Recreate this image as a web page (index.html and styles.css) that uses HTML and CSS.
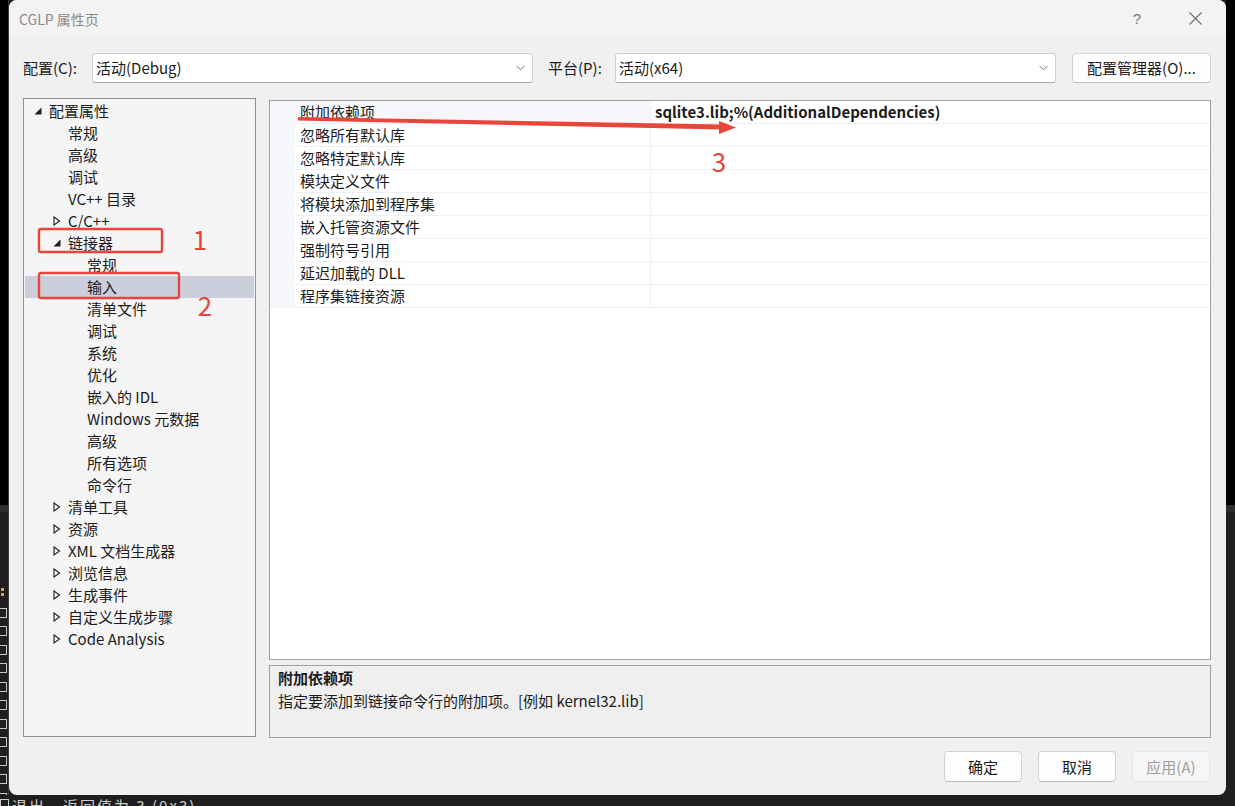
FILE: index.html
```html
<!DOCTYPE html>
<html lang="zh-CN">
<head>
<meta charset="utf-8">
<title>CGLP 属性页</title>
<link rel="stylesheet" href="styles.css">
</head>
<body>
<div class="desk">
  <div class="side side-left">
    <div class="term">
      <i class="dot"></i>
      <i class="box"></i><i class="box"></i><i class="box"></i><i class="box"></i><i class="box"></i><i class="box"></i><i class="box"></i><i class="box"></i><i class="box"></i><i class="box"></i><i class="box"></i>
    </div>
  </div>
  <div class="dialog">
    <div class="titlebar">
      <span class="title">CGLP 属性页</span>
      <div class="title-ctrls">
        <span class="help">?</span>
        <svg class="close" width="13" height="13" viewBox="0 0 13 13"><path d="M0.5 0.5 L12.5 12.5 M12.5 0.5 L0.5 12.5" stroke="#6f6f6f" stroke-width="1.1" fill="none"/></svg>
      </div>
    </div>

    <div class="config-row">
      <span class="lbl lbl-cfg">配置(C):</span>
      <div class="select"><span>活动(Debug)</span><svg class="chev" width="9" height="6" viewBox="0 0 9 6"><path d="M0.5 0.8 L4.5 4.8 L8.5 0.8" stroke="#707070" stroke-width="1" fill="none"/></svg></div>
      <span class="lbl lbl-plat">平台(P):</span>
      <div class="select"><span>活动(x64)</span><svg class="chev" width="9" height="6" viewBox="0 0 9 6"><path d="M0.5 0.8 L4.5 4.8 L8.5 0.8" stroke="#707070" stroke-width="1" fill="none"/></svg></div>
      <button class="btn btn-mgr">配置管理器(O)...</button>
    </div>

    <div class="main">
      <div class="tree">
        <div class="node l0"><span class="ico"><svg width="8" height="8" viewBox="0 0 8 8"><path d="M7.5 0.5 L7.5 7.5 L0.5 7.5 Z" fill="#1e1e1e"/></svg></span>配置属性</div>
        <div class="node l1"><span class="ico"></span>常规</div>
        <div class="node l1"><span class="ico"></span>高级</div>
        <div class="node l1"><span class="ico"></span>调试</div>
        <div class="node l1"><span class="ico"></span>VC++ 目录</div>
        <div class="node l1"><span class="ico"><svg width="8" height="10" viewBox="0 0 8 10"><path d="M1 1 L6.5 5 L1 9 Z" fill="none" stroke="#1e1e1e" stroke-width="1.1"/></svg></span>C/C++</div>
        <div class="node l1"><span class="ico"><svg width="8" height="8" viewBox="0 0 8 8"><path d="M7.5 0.5 L7.5 7.5 L0.5 7.5 Z" fill="#1e1e1e"/></svg></span>链接器</div>
        <div class="node l2"><span class="ico"></span>常规</div>
        <div class="node l2 selected"><span class="ico"></span>输入</div>
        <div class="node l2"><span class="ico"></span>清单文件</div>
        <div class="node l2"><span class="ico"></span>调试</div>
        <div class="node l2"><span class="ico"></span>系统</div>
        <div class="node l2"><span class="ico"></span>优化</div>
        <div class="node l2"><span class="ico"></span>嵌入的 IDL</div>
        <div class="node l2"><span class="ico"></span>Windows 元数据</div>
        <div class="node l2"><span class="ico"></span>高级</div>
        <div class="node l2"><span class="ico"></span>所有选项</div>
        <div class="node l2"><span class="ico"></span>命令行</div>
        <div class="node l1"><span class="ico"><svg width="8" height="10" viewBox="0 0 8 10"><path d="M1 1 L6.5 5 L1 9 Z" fill="none" stroke="#1e1e1e" stroke-width="1.1"/></svg></span>清单工具</div>
        <div class="node l1"><span class="ico"><svg width="8" height="10" viewBox="0 0 8 10"><path d="M1 1 L6.5 5 L1 9 Z" fill="none" stroke="#1e1e1e" stroke-width="1.1"/></svg></span>资源</div>
        <div class="node l1"><span class="ico"><svg width="8" height="10" viewBox="0 0 8 10"><path d="M1 1 L6.5 5 L1 9 Z" fill="none" stroke="#1e1e1e" stroke-width="1.1"/></svg></span>XML 文档生成器</div>
        <div class="node l1"><span class="ico"><svg width="8" height="10" viewBox="0 0 8 10"><path d="M1 1 L6.5 5 L1 9 Z" fill="none" stroke="#1e1e1e" stroke-width="1.1"/></svg></span>浏览信息</div>
        <div class="node l1"><span class="ico"><svg width="8" height="10" viewBox="0 0 8 10"><path d="M1 1 L6.5 5 L1 9 Z" fill="none" stroke="#1e1e1e" stroke-width="1.1"/></svg></span>生成事件</div>
        <div class="node l1"><span class="ico"><svg width="8" height="10" viewBox="0 0 8 10"><path d="M1 1 L6.5 5 L1 9 Z" fill="none" stroke="#1e1e1e" stroke-width="1.1"/></svg></span>自定义生成步骤</div>
        <div class="node l1"><span class="ico"><svg width="8" height="10" viewBox="0 0 8 10"><path d="M1 1 L6.5 5 L1 9 Z" fill="none" stroke="#1e1e1e" stroke-width="1.1"/></svg></span>Code Analysis</div>
      </div>

      <div class="right">
        <div class="grid">
          <div class="prow first"><span class="gut"></span><span class="pname">附加依赖项</span><span class="pval">sqlite3.lib;%(AdditionalDependencies)</span></div>
          <div class="prow"><span class="gut"></span><span class="pname">忽略所有默认库</span><span class="pval"></span></div>
          <div class="prow"><span class="gut"></span><span class="pname">忽略特定默认库</span><span class="pval"></span></div>
          <div class="prow"><span class="gut"></span><span class="pname">模块定义文件</span><span class="pval"></span></div>
          <div class="prow"><span class="gut"></span><span class="pname">将模块添加到程序集</span><span class="pval"></span></div>
          <div class="prow"><span class="gut"></span><span class="pname">嵌入托管资源文件</span><span class="pval"></span></div>
          <div class="prow"><span class="gut"></span><span class="pname">强制符号引用</span><span class="pval"></span></div>
          <div class="prow"><span class="gut"></span><span class="pname">延迟加载的 DLL</span><span class="pval"></span></div>
          <div class="prow"><span class="gut"></span><span class="pname">程序集链接资源</span><span class="pval"></span></div>
        </div>
        <div class="desc">
          <div class="desc-title">附加依赖项</div>
          <div class="desc-text">指定要添加到链接命令行的附加项。[例如 kernel32.lib]</div>
        </div>
      </div>
    </div>

    <div class="footer">
      <button class="btn btn-ok">确定</button>
      <button class="btn btn-ok">取消</button>
      <button class="btn btn-ok disabled">应用(A)</button>
    </div>
  </div>
  <div class="side side-right"></div>
</div>
<div class="console-line"><i class="cbox"></i><span>退出，返回值为 3 (0x3)。</span></div>

<svg class="annot" width="1235" height="806" viewBox="0 0 1235 806">
  <rect x="39" y="229" width="123" height="23" rx="2" fill="none" stroke="#e8453b" stroke-width="2.4"/>
  <rect x="39" y="273" width="140" height="25" rx="2" fill="none" stroke="#e8453b" stroke-width="2.4"/>
  <path d="M298 117 L722 124.5 L722 129.5 L298 120.5 Z" fill="#e8453b"/>
  <path d="M719 121 L736 127.5 L719 134 Z" fill="#e8453b"/>
  <text x="200" y="250" class="num">1</text>
  <text x="205" y="316" class="num">2</text>
  <text x="719" y="172" class="num">3</text>
</svg>
</body>
</html>
```

FILE: styles.css
```css
* { box-sizing: border-box; }
html, body { margin: 0; padding: 0; }
body {
  width: 1235px;
  height: 806px;
  overflow: hidden;
  position: relative;
  background: #1e1e1e;
  font-family: "Noto Sans CJK SC", "Noto Sans", sans-serif;
  color: #1b1b1b;
  font-size: 15px;
}
.desk {
  display: flex;
  height: 795px;
}
.side {
  width: 9px;
  flex: none;
  background: linear-gradient(#000 0, #000 505px, #2e2e2e 505px, #2e2e2e 512px, #1f1f1f 512px);
}
.side-left {
  overflow: hidden;
  border-right: 1px solid #3a3a3a;
}
.term {
  display: flex;
  flex-direction: column;
  align-items: flex-start;
  gap: 8.5px;
  padding-top: 588px;
}
.dot {
  display: block;
  width: 3px;
  height: 8px;
  margin-left: 1px;
  border-top: 3px solid #d9a441;
  border-bottom: 3px solid #d9a441;
  margin-bottom: 3px;
}
.box {
  display: block;
  width: 7px;
  height: 10px;
  border: 1px solid #c8c8c8;
  border-left: none;
}
.dialog {
  width: 1217px;
  flex: none;
  background: #f0f0f0;
  border-radius: 8px;
  display: flex;
  flex-direction: column;
  overflow: hidden;
}
.titlebar {
  height: 37px;
  background: #f3f3f3;
  display: flex;
  align-items: center;
  justify-content: space-between;
  padding-left: 10px;
}
.title {
  font-size: 14px;
  color: #8a8a8a;
  line-height: 20px;
}
.title-ctrls {
  display: flex;
  align-items: center;
  gap: 48px;
  margin-right: 24px;
}
.help {
  font-family: "Liberation Sans", sans-serif;
  font-size: 15px;
  color: #7a7a7a;
}
.config-row {
  display: flex;
  align-items: center;
  height: 30px;
  margin-top: 16px;
  padding-left: 14px;
}
.lbl { line-height: 20px; }
.lbl-cfg { width: 69px; }
.lbl-plat { width: 67px; margin-left: 15px; }
.select {
  width: 441px;
  height: 30px;
  background: #fff;
  border: 1px solid #cfcfcf;
  border-bottom-color: #a8a8a8;
  border-radius: 3px;
  display: flex;
  align-items: center;
  justify-content: space-between;
  padding: 0 7px 0 3px;
  line-height: 20px;
}
.btn {
  font-family: "Noto Sans CJK SC", "Noto Sans", sans-serif;
  font-size: 15px;
  color: #1b1b1b;
  background: #fdfdfd;
  border: 1px solid #d2d2d2;
  border-bottom-color: #bdbdbd;
  border-radius: 4px;
  padding: 0;
  line-height: 20px;
}
.btn-mgr {
  width: 139px;
  height: 30px;
  margin-left: 16px;
}
.main {
  display: flex;
  margin-top: 15px;
  padding-left: 14px;
  gap: 13px;
}
.tree {
  width: 233px;
  height: 639px;
  background: #f5f5f5;
  border: 1px solid #8e8f99;
  padding: 1px 1px 0 1px;
}
.node {
  height: 22px;
  line-height: 22px;
  display: flex;
  align-items: center;
  white-space: nowrap;
}
.node.l0 { padding-left: 8px; }
.node.l1 { padding-left: 27px; }
.node.l2 { padding-left: 46px; }
.node.selected { background: #cccedb; }
.ico {
  width: 16px;
  flex: none;
  display: flex;
  align-items: center;
  padding-left: 1px;
}
.right {
  width: 942px;
  display: flex;
  flex-direction: column;
  padding-top: 2px;
  gap: 5px;
}
.grid {
  height: 560px;
  background: #fff;
  border: 1px solid #a0a0a0;
}
.prow {
  display: flex;
  height: 23px;
  line-height: 22px;
}
.gut {
  width: 25px;
  flex: none;
  background: #f5f7fb;
}
.pname {
  width: 356px;
  flex: none;
  padding-left: 5px;
  border-bottom: 1px solid #eef0f5;
  border-right: 1px solid #eef0f5;
  white-space: nowrap;
}
.pval {
  flex: 1;
  padding-left: 4px;
  border-bottom: 1px solid #eef0f5;
  font-weight: bold;
  white-space: nowrap;
}
.prow.first .pname { background: #f5f7fb; }
.desc {
  height: 73px;
  background: #efefef;
  border: 1px solid #a0a0a0;
  padding: 1px 8px;
}
.desc-title {
  font-weight: bold;
  line-height: 22px;
}
.desc-text {
  line-height: 24px;
}
.footer {
  display: flex;
  justify-content: flex-end;
  gap: 16px;
  margin-top: 13px;
  padding-right: 16px;
}
.btn-ok {
  width: 78px;
  height: 31px;
}
.btn.disabled {
  background: #f6f6f6;
  border-color: #e6e6e6;
  color: #9d9d9d;
}
.console-line {
  height: 11px;
  overflow: hidden;
  color: #cfcfcf;
  font-size: 15px;
  line-height: 22px;
  display: flex;
  align-items: flex-start;
  white-space: nowrap;
}
.cbox {
  display: block;
  width: 9px;
  height: 12px;
  margin-top: 4px;
  margin-right: 3px;
  border: 1px solid #cfcfcf;
}
.console-line span { letter-spacing: 2px; }
.annot {
  position: absolute;
  left: 0;
  top: 0;
  pointer-events: none;
}
.num {
  font-family: "Noto Sans CJK SC", "DejaVu Sans", sans-serif;
  font-weight: 400;
  font-size: 26px;
  fill: #e8453b;
  text-anchor: middle;
}
```
